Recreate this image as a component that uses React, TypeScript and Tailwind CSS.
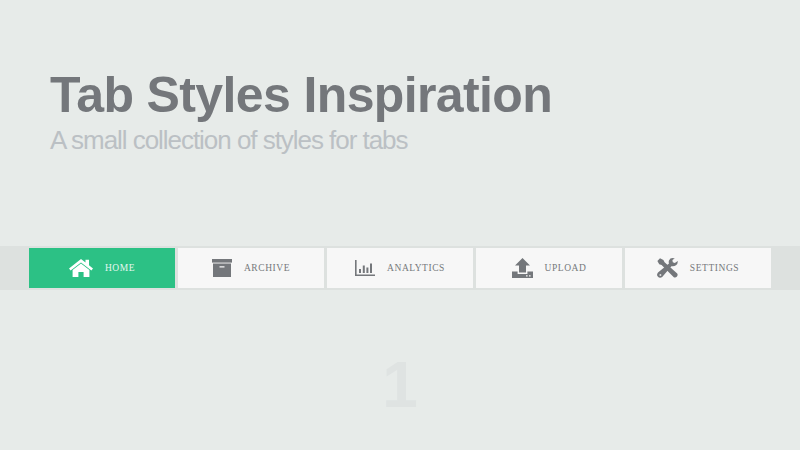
import type { ReactNode } from "react";

function HomeIcon() {
  return (
    <svg viewBox="0 0 24 18" className="h-[18px] w-6 fill-current">
      <path d="M12 0 L16.5 3.4 V0.8 H20 V6.2 L24 9.6 L22.4 11.4 L12 3.4 L1.6 11.4 L0 9.6 Z" />
      <path d="M12 4.6 L20.4 11 V18 H14.6 V13 H9.4 V18 H3.6 V11 Z" />
    </svg>
  );
}

function ArchiveIcon() {
  return (
    <svg viewBox="0 0 20 18" className="h-[18px] w-5 fill-current">
      <path d="M0 0 H20 V3.6 H0 Z" />
      <path fillRule="evenodd" d="M1 4.6 H19 V18 H1 Z M7.5 7.2 V8.6 H12.5 V7.2 Z" />
    </svg>
  );
}

function AnalyticsIcon() {
  return (
    <svg viewBox="0 0 20 16" className="h-4 w-5 fill-current">
      <path d="M0 0 H1.6 V14.4 H20 V16 H0 Z" />
      <path d="M4 9 H6 V13 H4 Z M7.8 5.5 H9.8 V13 H7.8 Z M11.4 7.5 H13.4 V13 H11.4 Z M15 3.5 H17 V13 H15 Z" />
    </svg>
  );
}

function UploadIcon() {
  return (
    <svg viewBox="0 0 21 20" className="h-5 w-[21px] fill-current">
      <path d="M10.5 0 L18 7.5 H14 V14.5 H7 V7.5 H3 Z" />
      <path
        fillRule="evenodd"
        d="M0 13.4 H5.6 V16 H15.4 V13.4 H21 V20 H0 Z M14 17.2 V18.6 H15.6 V17.2 Z M17 17.2 V18.6 H18.6 V17.2 Z"
      />
    </svg>
  );
}

function SettingsIcon() {
  return (
    <svg viewBox="0 0 21 20" className="h-5 w-[21px] fill-current">
      <path d="M0.4 3 L3 0.2 L6.4 2 L7.6 4.2 L20.2 15.4 Q21.2 17 20 18.6 Q18.4 20.2 16.8 19.2 L4.6 7 L2.2 6.2 Z" />
      <path
        fillRule="evenodd"
        d="M15.6 0 Q13 0 12 2.4 Q11.4 4 12 5.6 L1 14.4 Q-0.8 16.6 0.8 18.6 Q2.8 20.8 5.2 19 L14.4 8.2 Q17 8.8 19 7.2 Q21 5.6 20.8 3 L17.8 5 L15.8 4.2 L15.4 2 L17.8 0.4 Q16.6 0 15.6 0 Z M2.6 16.2 V17.8 H4.2 V16.2 Z"
      />
    </svg>
  );
}

type Tab = { label: string; icon: ReactNode; active?: boolean };

const tabs: Tab[] = [
  { label: "Home", icon: <HomeIcon />, active: true },
  { label: "Archive", icon: <ArchiveIcon /> },
  { label: "Analytics", icon: <AnalyticsIcon /> },
  { label: "Upload", icon: <UploadIcon /> },
  { label: "Settings", icon: <SettingsIcon /> },
];

export default function App() {
  return (
    <div className="h-[450px] w-full overflow-hidden bg-[#e7ebe9] font-['Liberation_Sans',sans-serif]">
      <header className="px-[50px] pt-[66px]">
        <h1 className="text-[50px] leading-[58px] font-bold tracking-[-0.62px] text-[#74777b]">
          Tab Styles Inspiration
        </h1>
        <p className="text-[26px] leading-[32px] tracking-[-1.04px] text-[#bbc0c4]">
          A small collection of styles for tabs
        </p>
      </header>

      <nav className="mt-[90px] bg-[#dde1df] py-[2px]">
        <ul className="mx-auto flex h-10 w-[742px] gap-[3px]">
          {tabs.map((tab) => (
            <li
              key={tab.label}
              className={
                tab.active
                  ? "flex flex-1 items-center justify-center gap-[12px] bg-[#2cc185] text-white"
                  : "flex flex-1 items-center justify-center gap-[12px] bg-[#f7f7f7] text-[#74777b]"
              }
            >
              {tab.icon}
              <span
                className={
                  tab.active
                    ? "pt-px font-['Liberation_Serif',serif] text-[9.5px] tracking-[0.55px] text-[#e4f7ef] uppercase"
                    : "pt-px font-['Liberation_Serif',serif] text-[9.5px] tracking-[0.55px] text-[#76797c] uppercase"
                }
              >
                {tab.label}
              </span>
            </li>
          ))}
        </ul>
      </nav>

      <div className="mt-[58px] text-center text-[64px] leading-[74px] font-bold text-[#dfe3e2]">1</div>
    </div>
  );
}
